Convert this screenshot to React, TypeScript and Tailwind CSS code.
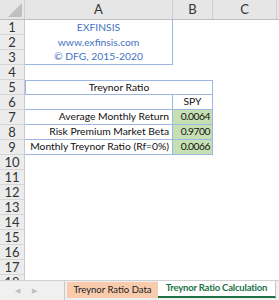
import React from "react";

const font = { fontFamily: 'Lato, "Open Sans", "Liberation Sans", sans-serif' };

const RowNum = ({ n }: { n: number }) => (
  <div className="w-[25px] shrink-0 h-full flex items-center justify-center bg-[#ececec] border-r border-r-[#c8c8c8] border-b border-b-[#d6d6d6] text-[13px] text-[#333] leading-none">
    {n}
  </div>
);

const blue = "border-[#9db6e2]";

export default function App() {
  const rows = Array.from({ length: 18 }, (_, i) => i + 1);
  const renderCells = (n: number) => {
    switch (n) {
      case 1:
        return (
          <div className={`w-[148px] h-full flex items-center justify-center text-[#4472c4] border-r ${blue}`}>EXFINSIS</div>
        );
      case 2:
        return (
          <div className={`w-[148px] h-full flex items-center justify-center text-[#4472c4] border-r ${blue}`}>www.exfinsis.com</div>
        );
      case 3:
        return (
          <div className={`w-[148px] h-full flex items-center justify-center text-[#4472c4] border-r border-b ${blue}`}>© DFG, 2015-2020</div>
        );
      case 5:
        return (
          <div className={`w-[188px] h-full flex items-center justify-center text-[#111] border ${blue}`}>Treynor Ratio</div>
        );
      case 6:
        return (
          <>
            <div className={`w-[148px] h-full border-r border-b ${blue}`} />
            <div className={`w-[40px] h-full flex items-center justify-center text-[#111] border-r border-b ${blue}`}>SPY</div>
          </>
        );
      case 7:
      case 8:
      case 9: {
        const label = n === 7 ? "Average Monthly Return" : n === 8 ? "Risk Premium Market Beta" : "Monthly Treynor Ratio (Rf=0%)";
        const val = n === 7 ? "0.0064" : n === 8 ? "0.9700" : "0.0066";
        return (
          <>
            <div className={`w-[148px] h-full flex items-center justify-end pr-[3px] text-[#111] border-r border-b ${blue}`}>{label}</div>
            <div className={`w-[40px] h-full flex items-center justify-end pr-[2px] text-[#111] tracking-[-0.5px] bg-[#c6e0b4] border-r border-b ${blue}`}>{val}</div>
          </>
        );
      }
      default:
        return null;
    }
  };

  return (
    <div className="w-[279px] h-[300px] overflow-hidden flex flex-col bg-white" style={font}>
      <div className="h-[20px] shrink-0 flex bg-[#e6e6e6] border-b border-b-[#bdbdbd] text-[13px] text-[#333]">
        <div className="w-[25px] shrink-0 h-full relative border-r border-r-[#cfcfcf]">
          <svg className="absolute right-[2px] bottom-[2px]" width="14" height="14" viewBox="0 0 14 14">
            <polygon points="14,0 14,14 0,14" fill="#bfbfbf" />
          </svg>
        </div>
        <div className="w-[148px] shrink-0 flex items-center justify-center border-r border-r-[#cfcfcf]">A</div>
        <div className="w-[40px] shrink-0 flex items-center justify-center border-r border-r-[#cfcfcf]">B</div>
        <div className="w-[64px] shrink-0 flex items-center justify-center border-r border-r-[#cfcfcf]">C</div>
        <div className="flex-1" />
      </div>
      <div className="h-[260px] shrink-0 overflow-hidden text-[10.3px]">
        {rows.map((n) => (
          <div key={n} className="h-[15px] flex whitespace-nowrap">
            <RowNum n={n} />
            {renderCells(n)}
          </div>
        ))}
      </div>
      <div className="h-[20px] shrink-0 flex bg-[#f0f0f0] border-t border-t-[#d0d0d0] text-[9.5px] whitespace-nowrap">
        <div className="w-[65px] shrink-0 flex items-center text-[#c0c0c0] text-[7px] border-r border-r-[#c8c8c8]">
          <span className="ml-[15px]">◀</span>
          <span className="ml-[12px]">▶</span>
        </div>
        <div className="ml-[2px] w-[91px] shrink-0 h-[16px] mt-[1px] flex items-center justify-center bg-[#f8cbad] text-[#222]">Treynor Ratio Data</div>
        <div className="w-[118px] shrink-0 h-[17px] flex items-center justify-center bg-white text-[#217346] font-bold tracking-[-0.2px] border-b-2 border-b-[#217346] border-r border-r-[#c8c8c8]">Treynor Ratio Calculation</div>
      </div>
    </div>
  );
}
